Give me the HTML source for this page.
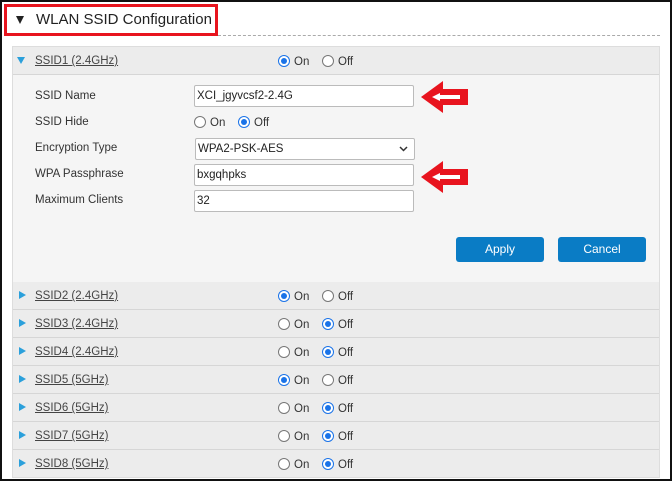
<!DOCTYPE html><html><head><style>
body{margin:0;width:672px;height:481px;overflow:hidden;background:#fff;font-family:"Liberation Sans",Arial,sans-serif;position:relative}
.frame{position:absolute;left:0;top:0;width:668px;height:477px;border:2px solid #111}
.abs{position:absolute}
.title{left:4px;top:4px;width:208px;height:26px;border:3px solid #e8141e;font-size:15px;color:#222;line-height:26px;white-space:nowrap;background:#fff}
.dash{left:218px;top:35px;width:442px;border-top:1px dashed #aaa}
.box{left:12px;top:46px;width:646px;height:430px;border:1px solid #ddd;background:#f5f5f5}
.row{position:absolute;left:0;width:646px;height:27px;background:#ececec;border-bottom:1px solid #d6d6d6;font-size:11.5px;color:#444}
.row .tri{position:absolute;left:6px;top:9px;width:0;height:0;border-top:4.5px solid transparent;border-bottom:4.5px solid transparent;border-left:7px solid #2ba0db}
.row .tri.dn{border-left:4.5px solid transparent;border-right:4.5px solid transparent;border-top:7px solid #2ba0db;border-bottom:0;left:4px;top:10px}
.row .nm{position:absolute;left:22px;top:8px;text-decoration:underline}
.r{position:absolute;width:10px;height:10px;border:1px solid #777;border-radius:50%;background:#fff}
.r.on{border-color:#1a73e8}
.r.on::after{content:"";position:absolute;left:2px;top:2px;width:6px;height:6px;border-radius:50%;background:#1a73e8}
.lab{position:absolute;font-size:11.5px;color:#333}
.lbl{position:absolute;left:22px;font-size:11.5px;color:#333}
.inp{position:absolute;left:181px;width:216px;height:20px;border:1px solid #bbb;background:#fff;font-size:11.5px;line-height:20px;padding-left:2px;color:#222;border-radius:2px}
.btn{position:absolute;top:190px;width:88px;height:25px;background:#0a7cc5;color:#fff;font-size:12px;text-align:center;line-height:25px;border-radius:3px}
</style></head><body>
<div class="frame"></div>
<div class="abs dash"></div>
<div class="abs title"><span style="position:absolute;left:9px;top:9px;width:0;height:0;border-left:4.5px solid transparent;border-right:4.5px solid transparent;border-top:8px solid #222"></span><span style="position:absolute;left:29px;top:0">WLAN SSID Configuration</span></div>
<div class="abs box">
<div class="row" style="top:0"><span class="tri dn"></span><span class="nm">SSID1 (2.4GHz)</span><span class="r on" style="left:265px;top:8px"></span><span class="lab" style="left:281px;top:9px">On</span><span class="r" style="left:309px;top:8px"></span><span class="lab" style="left:325px;top:9px">Off</span></div>
<div class="lbl" style="top:43px">SSID Name</div>
<div class="inp" style="top:38px">XCI_jgyvcsf2-2.4G</div>
<div class="lbl" style="top:69px">SSID Hide</div>
<span class="r" style="left:181px;top:69px"></span><span class="lab" style="left:197px;top:70px">On</span><span class="r on" style="left:225px;top:69px"></span><span class="lab" style="left:241px;top:70px">Off</span>
<div class="lbl" style="top:95px">Encryption Type</div>
<div class="inp" style="top:91px;left:182px">WPA2-PSK-AES<svg style="position:absolute;right:6px;top:7px" width="9" height="6"><path d="M1 1L4.5 4.5L8 1" stroke="#333" stroke-width="1.5" fill="none"/></svg></div>
<div class="lbl" style="top:121px">WPA Passphrase</div>
<div class="inp" style="top:117px">bxgqhpks</div>
<div class="lbl" style="top:147px">Maximum Clients</div>
<div class="inp" style="top:143px">32</div>
<div class="btn" style="left:443px">Apply</div>
<div class="btn" style="left:545px">Cancel</div>
<div class="row" style="top:235px"><span class="tri"></span><span class="nm">SSID2 (2.4GHz)</span><span class="r on" style="left:265px;top:8px"></span><span class="lab" style="left:281px;top:9px">On</span><span class="r" style="left:309px;top:8px"></span><span class="lab" style="left:325px;top:9px">Off</span></div>
<div class="row" style="top:263px"><span class="tri"></span><span class="nm">SSID3 (2.4GHz)</span><span class="r" style="left:265px;top:8px"></span><span class="lab" style="left:281px;top:9px">On</span><span class="r on" style="left:309px;top:8px"></span><span class="lab" style="left:325px;top:9px">Off</span></div>
<div class="row" style="top:291px"><span class="tri"></span><span class="nm">SSID4 (2.4GHz)</span><span class="r" style="left:265px;top:8px"></span><span class="lab" style="left:281px;top:9px">On</span><span class="r on" style="left:309px;top:8px"></span><span class="lab" style="left:325px;top:9px">Off</span></div>
<div class="row" style="top:319px"><span class="tri"></span><span class="nm">SSID5 (5GHz)</span><span class="r on" style="left:265px;top:8px"></span><span class="lab" style="left:281px;top:9px">On</span><span class="r" style="left:309px;top:8px"></span><span class="lab" style="left:325px;top:9px">Off</span></div>
<div class="row" style="top:347px"><span class="tri"></span><span class="nm">SSID6 (5GHz)</span><span class="r" style="left:265px;top:8px"></span><span class="lab" style="left:281px;top:9px">On</span><span class="r on" style="left:309px;top:8px"></span><span class="lab" style="left:325px;top:9px">Off</span></div>
<div class="row" style="top:375px"><span class="tri"></span><span class="nm">SSID7 (5GHz)</span><span class="r" style="left:265px;top:8px"></span><span class="lab" style="left:281px;top:9px">On</span><span class="r on" style="left:309px;top:8px"></span><span class="lab" style="left:325px;top:9px">Off</span></div>
<div class="row" style="top:403px;border-bottom:0"><span class="tri"></span><span class="nm">SSID8 (5GHz)</span><span class="r" style="left:265px;top:8px"></span><span class="lab" style="left:281px;top:9px">On</span><span class="r on" style="left:309px;top:8px"></span><span class="lab" style="left:325px;top:9px">Off</span></div>
</div>
<svg class="abs" style="left:418px;top:78px" width="54" height="38"><polygon points="3,19 25,3 25,11 50,11 50,27 25,27 25,35" fill="#e8141e"/><polygon points="14,19 22,15 22,17 42,17 42,21 22,21 22,23" fill="#fff"/></svg>
<svg class="abs" style="left:418px;top:158px" width="54" height="38"><polygon points="3,19 25,3 25,11 50,11 50,27 25,27 25,35" fill="#e8141e"/><polygon points="14,19 22,15 22,17 42,17 42,21 22,21 22,23" fill="#fff"/></svg>
</body></html>
